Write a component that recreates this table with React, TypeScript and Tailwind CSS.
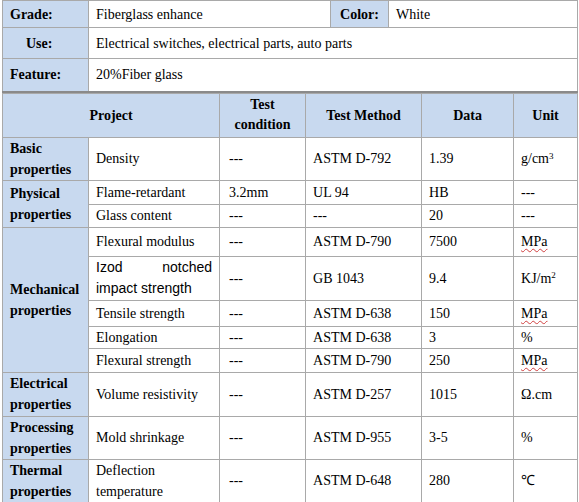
import React from "react";

const B = "border border-[#a9a9a9]";
const LB = "bg-[#c8d9ef]";

function MPa() {
  return <span className="underline decoration-wavy decoration-[#d04040] decoration-1 underline-offset-2">MPa</span>;
}

type Row = { h: string; name: React.ReactNode; sans?: boolean; cond: string; method: string; data: string; unit: React.ReactNode };

export default function App() {
  const cellTxt = "px-[7px] align-middle";
  const rows: { group: React.ReactNode; items: Row[] }[] = [
    { group: <>Basic<br />properties</>, items: [{ h: "h-[43px]", name: "Density", cond: "---", method: "ASTM D-792", data: "1.39", unit: <>g/cm<sup className="text-[9px]">3</sup></> }] },
    {
      group: <>Physical<br />properties</>,
      items: [
        { h: "h-[24px]", name: "Flame-retardant", cond: "3.2mm", method: "UL 94", data: "HB", unit: "---" },
        { h: "h-[23px]", name: "Glass content", cond: "---", method: "---", data: "20", unit: "---" },
      ],
    },
    {
      group: <>Mechanical<br />properties</>,
      items: [
        { h: "h-[29px]", name: "Flexural modulus", cond: "---", method: "ASTM D-790", data: "7500", unit: <MPa /> },
        { h: "h-[44px]", name: "Izod notched impact strength", sans: true, cond: "---", method: "GB 1043", data: "9.4", unit: <>KJ/m<sup className="text-[9px]">2</sup></> },
        { h: "h-[26px]", name: "Tensile strength", cond: "---", method: "ASTM D-638", data: "150", unit: <MPa /> },
        { h: "h-[22px]", name: "Elongation", cond: "---", method: "ASTM D-638", data: "3", unit: "%" },
        { h: "h-[24px]", name: "Flexural strength", cond: "---", method: "ASTM D-790", data: "250", unit: <MPa /> },
      ],
    },
    { group: <>Electrical<br />properties</>, items: [{ h: "h-[44px]", name: "Volume resistivity", cond: "---", method: "ASTM D-257", data: "1015", unit: "Ω.cm" }] },
    { group: <>Processing<br />properties</>, items: [{ h: "h-[43px]", name: "Mold shrinkage", cond: "---", method: "ASTM D-955", data: "3-5", unit: "%" }] },
    { group: <>Thermal<br />properties</>, items: [{ h: "h-[41px]", name: <>Deflection<br />temperature</>, cond: "---", method: "ASTM D-648", data: "280", unit: "℃" }] },
  ];

  return (
    <div className="w-[579px] h-[502px] bg-white text-black text-[14px] leading-[21px] overflow-hidden font-['Liberation_Serif','Times_New_Roman',serif]">
      <div className="px-[2px]">
        <table className="w-[575px] table-fixed border-collapse border-b-2 border-b-[#8a8a8a]">
          <colgroup>
            <col className="w-[86px]" />
            <col className="w-[242px]" />
            <col className="w-[58px]" />
            <col className="w-[189px]" />
          </colgroup>
          <tbody>
            <tr className="h-[27px]">
              <td className={`${B} ${LB} font-bold pl-[7px]`}>Grade:</td>
              <td className={`${B} ${cellTxt}`}>Fiberglass enhance</td>
              <td className={`${B} ${LB} font-bold text-center`}>Color:</td>
              <td className={`${B} ${cellTxt}`}>White</td>
            </tr>
            <tr className="h-[31px]">
              <td className={`${B} ${LB} font-bold pl-[23px]`}>Use:</td>
              <td colSpan={3} className={`${B} ${cellTxt}`}>Electrical switches, electrical parts, auto parts</td>
            </tr>
            <tr className="h-[33px]">
              <td className={`${B} ${LB} font-bold pl-[7px]`}>Feature:</td>
              <td colSpan={3} className={`${B} ${cellTxt}`}>20%Fiber glass</td>
            </tr>
          </tbody>
        </table>
        <table className="w-[575px] table-fixed border-collapse border-b-2 border-b-[#8a8a8a]">
          <colgroup>
            <col className="w-[86px]" />
            <col className="w-[131px]" />
            <col className="w-[86px]" />
            <col className="w-[116px]" />
            <col className="w-[92px]" />
            <col className="w-[64px]" />
          </colgroup>
          <tbody>
            <tr className={`h-[44px] ${LB} font-bold`}>
              <td colSpan={2} className={`${B} text-center`}>Project</td>
              <td className={`${B} text-center leading-[20px]`}>Test<br />condition</td>
              <td className={`${B} text-center`}>Test Method</td>
              <td className={`${B} text-center`}>Data</td>
              <td className={`${B} text-center`}>Unit</td>
            </tr>
            {rows.map((g, gi) =>
              g.items.map((r, ri) => (
                <tr key={`${gi}-${ri}`} className={r.h}>
                  {ri === 0 && (
                    <td rowSpan={g.items.length} className={`${B} ${LB} font-bold pl-[7px] pr-[2px] align-middle`}>
                      {g.group}
                    </td>
                  )}
                  <td className={`${B} ${cellTxt}`}>
                    {r.sans ? (
                      <div className="text-justify text-[14px] leading-[21px] font-['Liberation_Sans',Arial,sans-serif]">
                        {r.name}
                      </div>
                    ) : (
                      r.name
                    )}
                  </td>
                  <td className={`${B} pl-[9px] align-middle`}>{r.cond}</td>
                  <td className={`${B} ${cellTxt}`}>{r.method}</td>
                  <td className={`${B} ${cellTxt}`}>{r.data}</td>
                  <td className={`${B} ${cellTxt}`}>{r.unit}</td>
                </tr>
              ))
            )}
          </tbody>
        </table>
      </div>
    </div>
  );
}
